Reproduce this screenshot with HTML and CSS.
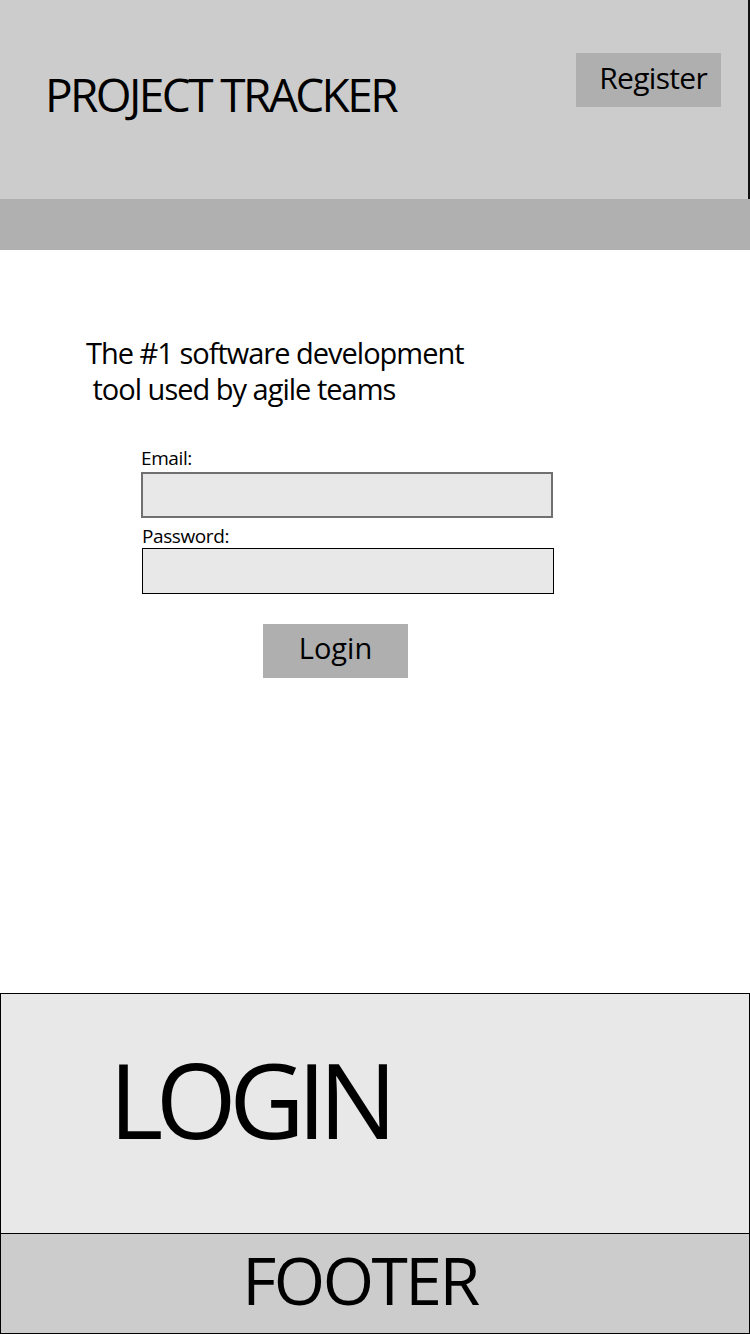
FILE: index.html
```html
<!DOCTYPE html>
<html lang="en">
<head>
<meta charset="utf-8">
<title>Project Tracker - Login</title>
<link rel="stylesheet" href="styles.css">
</head>
<body>
<div class="page">
  <header class="top">
    <h1 class="brand">PROJECT TRACKER</h1>
    <a class="register" href="#">Register</a>
  </header>
  <div class="band"></div>
  <main class="content">
    <p class="tagline">The #1 software development<br>&nbsp;tool used by agile teams</p>
    <form class="login-form">
      <label class="field-label email-label" for="email">Email:</label>
      <input class="field email-field" id="email" type="email">
      <label class="field-label password-label" for="password">Password:</label>
      <input class="field password-field" id="password" type="password">
      <button class="login-btn" type="button">Login</button>
    </form>
  </main>
  <section class="hero">
    <h2 class="hero-title">LOGIN</h2>
  </section>
  <footer class="foot">
    <span class="foot-title">FOOTER</span>
  </footer>
</div>
</body>
</html>
```

FILE: styles.css
```css
* { box-sizing: border-box; }

html, body {
  margin: 0;
  padding: 0;
  background: #ffffff;
}

body {
  font-family: "Open Sans", "Liberation Sans", sans-serif;
  color: #000;
}

.page {
  width: 750px;
  height: 1334px;
  display: flex;
  flex-direction: column;
  overflow: hidden;
}

.top {
  height: 199px;
  background: #cccccc;
  border-right: 2px solid #111;
  display: flex;
  justify-content: space-between;
  align-items: flex-start;
  padding: 0 27px 0 45px;
}

.brand {
  margin: 71px 0 0;
  font-size: 46px;
  line-height: 46px;
  font-weight: 400;
  letter-spacing: -2.6px;
}

.register {
  margin-top: 53px;
  width: 145px;
  height: 54px;
  background: #afafaf;
  color: #000;
  text-decoration: none;
  font-size: 30px;
  line-height: 50px;
  letter-spacing: -0.7px;
  text-align: right;
  padding-right: 14px;
}

.band {
  height: 51px;
  background: #b0b0b0;
}

.content {
  flex: 1;
  padding: 85px 0 0 86px;
}

.tagline {
  margin: 0;
  font-size: 29px;
  line-height: 36px;
  letter-spacing: -1px;
}

.login-form {
  margin: 40px 0 0 55px;
  width: 413px;
  display: flex;
  flex-direction: column;
  align-items: flex-start;
}

.field-label {
  font-size: 19px;
  line-height: 22px;
  letter-spacing: -0.4px;
}

.email-label { margin-bottom: 3px; }

.password-label {
  margin-top: 7px;
  margin-left: 1px;
  margin-bottom: 1px;
}

.field {
  display: block;
  height: 46px;
  width: 412px;
  background: #e8e8e8;
  margin: 0;
  padding: 0;
  font: inherit;
}

.email-field { border: 2px solid #707070; }

.password-field {
  border: 1px solid #000;
  margin-left: 1px;
}

.login-btn {
  margin: 30px 0 0 122px;
  width: 145px;
  height: 54px;
  border: none;
  background: #afafaf;
  font-family: inherit;
  font-size: 29px;
  color: #000;
  padding: 0 0 7px;
}

.hero {
  height: 241px;
  background: #e8e8e8;
  border: 1px solid #000;
  padding: 53px 0 0 108px;
}

.hero-title {
  margin: 0;
  font-size: 104px;
  line-height: 104px;
  font-weight: 400;
  letter-spacing: -7.5px;
}

.foot {
  height: 100px;
  background: #cccccc;
  border: 1px solid #000;
  border-top: none;
  display: flex;
  justify-content: center;
  padding: 12px 30px 0 0;
}

.foot-title {
  font-size: 66px;
  line-height: 66px;
  letter-spacing: -2.5px;
}
```
